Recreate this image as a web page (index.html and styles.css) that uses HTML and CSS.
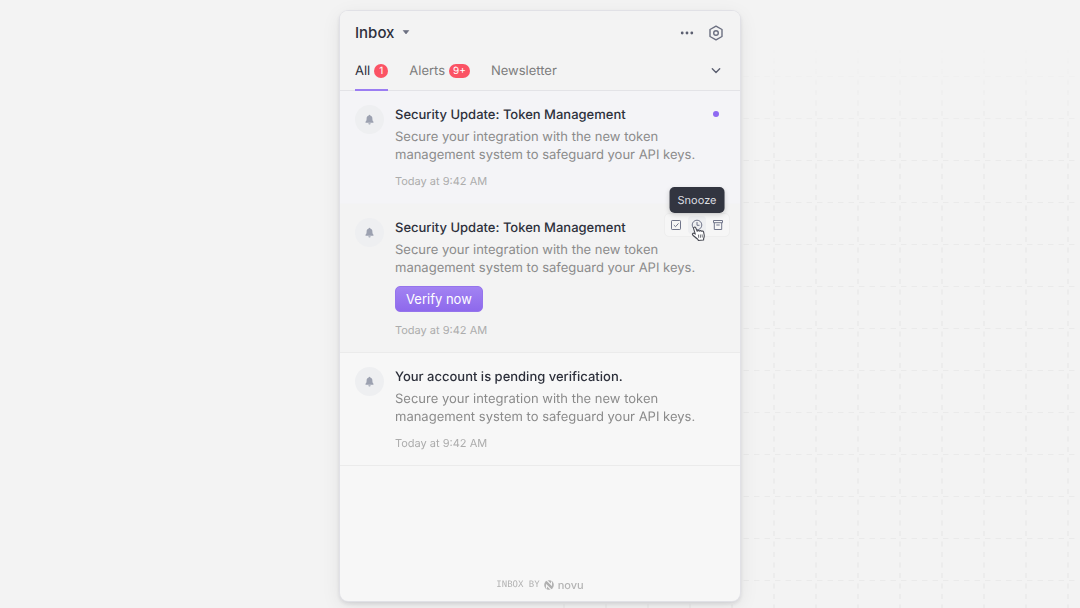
FILE: index.html
```html
<!DOCTYPE html>
<html lang="en">
<head>
    <meta charset="UTF-8">
    <meta name="viewport" content="width=device-width, initial-scale=1.0">
    <title>Inbox</title>
    <link rel="stylesheet" href="styles.css">
</head>
<body>
    <!-- dashed background grid -->
    <svg class="grid" aria-hidden="true">
        <defs>
            <pattern id="cell" width="42" height="42" patternUnits="userSpaceOnUse">
                <path d="M20 0V42" stroke="#ececec" stroke-width="2" stroke-dasharray="5 5.5"/>
                <path d="M0 28.5H42" stroke="#eaeaea" stroke-dasharray="5.5 5"/>
            </pattern>
        </defs>
        <rect width="100%" height="100%" fill="url(#cell)"/>
    </svg>

    <main class="inbox">
        <header class="inbox-header">
            <button class="title-btn" type="button">
                Inbox
                <svg width="8" height="5" viewBox="0 0 8 5"><path d="M1.2.5h5.6L4 4z" fill="#6b6f80" stroke="#6b6f80" stroke-width=".6" stroke-linejoin="round"/></svg>
            </button>
            <div class="header-actions">
                <button class="icon-btn" type="button" aria-label="More">
                    <svg width="16" height="16" viewBox="0 0 16 16" fill="#5b5f70"><circle cx="3.2" cy="8" r="1.4"/><circle cx="8" cy="8" r="1.4"/><circle cx="12.8" cy="8" r="1.4"/></svg>
                </button>
                <button class="icon-btn" type="button" aria-label="Settings">
                    <svg width="16" height="16" viewBox="0 0 16 16" fill="none" stroke="#6b6f80" stroke-width="1.4" stroke-linejoin="round"><path d="M8 1.1l6 3.4v7L8 14.9l-6-3.4v-7z"/><circle cx="8" cy="8" r="2.3"/></svg>
                </button>
            </div>
        </header>

        <nav class="tabs">
            <a class="tab active" href="#all">All <span class="badge">1</span></a>
            <a class="tab" href="#alerts">Alerts <span class="badge">9+</span></a>
            <a class="tab" href="#newsletter">Newsletter</a>
            <button class="icon-btn more-tabs" type="button" aria-label="More tabs">
                <svg width="16" height="16" viewBox="0 0 16 16" fill="none" stroke="#5b5f70" stroke-width="1.4" stroke-linecap="round" stroke-linejoin="round"><path d="M4.3 6.7L8 10.400l3.700-3.700"/></svg>
            </button>
        </nav>

        <article class="item unread">
            <span class="avatar">
                <svg width="9" height="11" viewBox="0 0 10 12"><path d="M5 .6c.5 0 .8.3.8.8v.2C7.3 2 8.2 3.2 8.2 4.8c0 2.200.5 3 1.200 3.700.4.4.2 1-.4 1H1c-.6 0-.8-.6-.4-1 .7-.7 1.200-1.500 1.200-3.700C1.800 3.200 2.700 2 4.200 1.600v-.2c0-.5.3-.8.800-.8zM3.700 10.200h2.600a1.300 1.300 0 0 1-2.600 0z" fill="#9ca1b0"/></svg>
            </span>
            <div class="content">
                <h2>Security Update: Token Management</h2>
                <p>Secure your integration with the new token management system to safeguard your API keys.</p>
                <time>Today at 9:42 AM</time>
            </div>
            <span class="dot"></span>
        </article>

        <article class="item hovered">
            <span class="avatar">
                <svg width="9" height="11" viewBox="0 0 10 12"><path d="M5 .6c.5 0 .8.3.8.8v.2C7.3 2 8.2 3.2 8.2 4.8c0 2.200.5 3 1.200 3.700.4.4.2 1-.4 1H1c-.6 0-.8-.6-.4-1 .7-.7 1.200-1.500 1.200-3.700C1.800 3.200 2.700 2 4.200 1.600v-.2c0-.5.3-.8.800-.8zM3.700 10.200h2.600a1.300 1.300 0 0 1-2.600 0z" fill="#9ca1b0"/></svg>
            </span>
            <div class="content">
                <h2>Security Update: Token Management</h2>
                <p>Secure your integration with the new token management system to safeguard your API keys.</p>
                <button class="primary" type="button">Verify now</button>
                <time>Today at 9:42 AM</time>
            </div>
            <div class="toolbar">
                <button type="button" aria-label="Mark as read">
                    <svg width="12" height="12" viewBox="0 0 12 12" fill="none" stroke="#70758a"><rect x="1.5" y="1.5" width="9" height="9" rx=".7"/><path d="M3.8 6l1.7 1.7 3-3.3"/></svg>
                </button>
                <button class="current" type="button" aria-describedby="snooze-tip" aria-label="Snooze">
                    <svg width="12" height="12" viewBox="0 0 12 12" fill="none" stroke="#70758a"><circle cx="6" cy="6" r="4.8"/><path d="M6 3v3.3h2.5"/></svg>
                </button>
                <button type="button" aria-label="Archive">
                    <svg width="12" height="12" viewBox="0 0 12 12" fill="none" stroke="#70758a"><path d="M1.5 1.5h9v2.2h-9zM2.300 3.700v6.800h7.400V3.700M4.300 6h3.400"/></svg>
                </button>
                <span class="tooltip" id="snooze-tip" role="tooltip">Snooze</span>
                <svg class="cursor" width="14" height="17" viewBox="0 0 14 17" aria-hidden="true"><path d="M4.300 9.100L2.600 3.600C2.100 2.200 4 1.400 4.700 2.800l1.500 3.400C6.600 5.400 7.800 5.300 8.300 6.100 8.900 5.400 10 5.500 10.400 6.300c.8-.5 2-.2 2.200.8l.6 2.900c.3 1.800-.2 2.600-.6 3.600V15l-5.200.5-.6-1.300C5 13.200 3.600 11.600 1.700 10 .9 9 2 7.700 3.200 8.400z" fill="#fff" stroke="#4a4c55" stroke-width="1.100" stroke-linejoin="round"/><path d="M7.400 9.600l.3 3.200M9.300 9.500l.2 3.200M11.100 9.400l.2 3.100" stroke="#4a4c55" stroke-width=".8" fill="none"/></svg>
            </div>
        </article>

        <article class="item">
            <span class="avatar">
                <svg width="9" height="11" viewBox="0 0 10 12"><path d="M5 .6c.5 0 .8.3.8.8v.2C7.3 2 8.2 3.2 8.2 4.8c0 2.200.5 3 1.200 3.700.4.4.2 1-.4 1H1c-.6 0-.8-.6-.4-1 .7-.7 1.200-1.500 1.200-3.700C1.800 3.200 2.700 2 4.200 1.600v-.2c0-.5.3-.8.800-.8zM3.700 10.200h2.600a1.300 1.300 0 0 1-2.600 0z" fill="#9ca1b0"/></svg>
            </span>
            <div class="content">
                <h2>Your account is pending verification.</h2>
                <p>Secure your integration with the new token management system to safeguard your API keys.</p>
                <time>Today at 9:42 AM</time>
            </div>
        </article>

        <footer class="powered">
            <span class="by">INBOX BY</span>
            <svg width="10" height="10" viewBox="0 0 10 10"><circle cx="5" cy="5" r="4.8" fill="#b0b0b0"/><path d="M2.600 0l4.900 5V1.600M7.400 10L2.500 5v3.400" fill="none" stroke="#f7f7f7" stroke-width="1.100"/></svg>
            <span class="brand">novu</span>
        </footer>
    </main>
</body>
</html>
```

FILE: styles.css
```css
* { box-sizing: border-box; }
body { font-family: Inter, "Liberation Sans", sans-serif; margin: 0; padding: 11px 16px 7px; background: #f3f3f3; color: #2d303b; text-rendering: geometricPrecision; }
button { font: inherit; color: inherit; background: none; border: 0; padding: 0; cursor: pointer; }
svg { display: block; }

.grid { position: fixed; top: 48px; left: calc(50% + 4px); width: 532px; height: 100%; z-index: -1; -webkit-mask-image: linear-gradient(transparent, #000 96px); mask-image: linear-gradient(transparent, #000 96px); }

.inbox { display: flex; flex-direction: column; max-width: 400px; min-height: calc(100vh - 18px); margin: 0 auto; background: #f7f7f7; border-radius: 8px; box-shadow: 0 0 0 1px #e1e1e6, 0 2px 5px rgba(20, 20, 40, .14), 0 5px 20px rgba(20, 20, 20, .08); }

.inbox-header { display: flex; justify-content: space-between; align-items: center; height: 43px; padding: 0 16px 0 15px; background: #f3f3f3; border-radius: 8px 8px 0 0; }
.title-btn { display: flex; align-items: center; gap: 8px; font-size: 15px; font-weight: 450; }
.header-actions { display: flex; gap: 13px; }
.icon-btn { width: 16px; height: 16px; }

.tabs { display: flex; gap: 21px; height: 37px; padding: 0 16px 0 15px; background: #f3f3f3; border-bottom: 1px solid #e3e3e7; }
.tab { display: flex; align-items: center; gap: 4px; height: 37px; padding-bottom: 2px; color: #7d7d7d; font-size: 13px; text-decoration: none; border-bottom: 2px solid transparent; }
.tab.active { color: #2d303b; border-color: #9b7df2; }
.badge { min-width: 14px; padding: 0 4px; border-radius: 8px; background: #fb5364; color: #fff; font-size: 10px; line-height: 14px; text-align: center; }
.more-tabs { margin: 8px 0 0 auto; }

.item { position: relative; display: flex; gap: 11px; padding: 14px 16px 13px 15px; border-bottom: 1px solid #ebebeb; }
.item.unread { background: #f4f4f7; border-color: #f3f3f5; }
.item.hovered { background: #f3f3f3; }
.avatar { display: flex; align-items: center; justify-content: center; flex: none; width: 29px; height: 29px; border-radius: 50%; background: #eeeff1; }
.content { flex: 1; }
.item h2 { margin: 0 0 3px; font-size: 13px; font-weight: 450; line-height: 20px; }
.item p { margin: 0 0 9px; color: #8b8b8b; font-size: 13px; line-height: 18px; }
.item time { display: block; color: #acacac; font-size: 11px; line-height: 17px; }
.dot { flex: none; width: 6px; height: 6px; margin: 6px 5px 0 0; border-radius: 50%; background: #8e69f2; }
.primary { display: block; height: 26px; margin-bottom: 10px; padding: 0 10px; border: 1px solid #9574ec; border-radius: 5px; background: linear-gradient(#a283f2, #8e69ec); color: #fff; font-size: 13px; }

.toolbar { position: absolute; top: 9px; right: 10px; display: flex; gap: 3px; padding: 2px; border: 1px solid #eee; border-radius: 5px; background: #f6f6f6; }
.toolbar button { display: flex; align-items: center; justify-content: center; width: 18px; height: 18px; border-radius: 4px; }
.toolbar .current { background: #eeeff1; }
.tooltip { position: absolute; bottom: 23px; left: 50%; transform: translateX(-50%); padding: 0 8px; border-radius: 5px; background: #323540; box-shadow: 0 2px 5px rgba(0, 0, 0, .15); color: #dedfe2; font-size: 11px; line-height: 26px; }
.cursor { position: absolute; top: 11px; left: 26px; }

.powered { display: flex; justify-content: center; align-items: center; gap: 4px; margin-top: auto; padding-bottom: 9px; color: #b4b4b4; line-height: 14px; }
.by { font-family: "DejaVu Sans Mono", monospace; font-size: 9px; }
.brand { font-size: 11px; font-weight: 500; }
```
